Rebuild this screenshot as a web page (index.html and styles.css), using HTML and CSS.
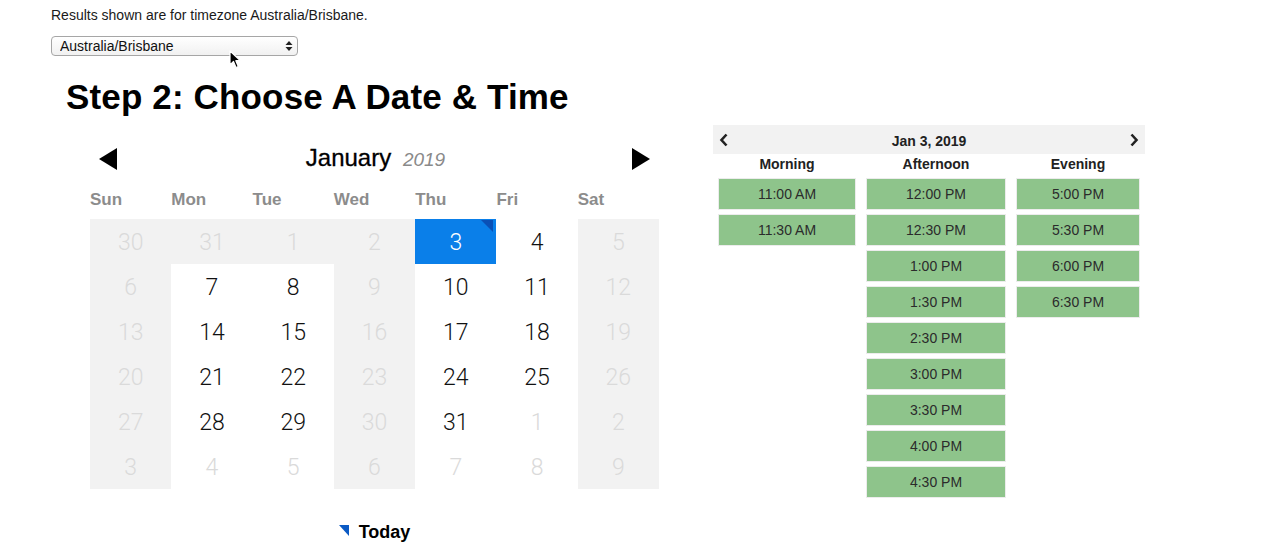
FILE: index.html
```html
<!DOCTYPE html>
<html>
<head>
<meta charset="utf-8">
<link rel="stylesheet" href="styles.css">
</head>
<body>
<div class="page">
  <p class="tz-note">Results shown are for timezone Australia/Brisbane.</p>
  <div class="select-wrap">
    <select class="tz-select"><option>Australia/Brisbane</option></select>
    <svg class="select-arrows" width="8" height="12" viewBox="0 0 8 12"><path d="M4 1 L7.5 5 H0.5 Z M4 11 L7.5 7 H0.5 Z" fill="#222"/></svg>
    <svg class="cursor" width="14" height="20" viewBox="0 0 14 20"><path d="M1 1 L1 15 L4.5 11.5 L7 17.5 L9.3 16.5 L6.8 10.7 L11.5 10.7 Z" fill="#000" stroke="#fff" stroke-width="1.2" stroke-linejoin="round"/></svg>
  </div>
  <h1 class="title">Step 2: Choose A Date &amp; Time</h1>

  <div class="booking">
    <div class="calendar">
      <div class="cal-nav">
        <svg width="18" height="22" viewBox="0 0 18 22"><path d="M18 0 V22 L0 11 Z" fill="#000"/></svg>
        <div class="cal-month">January <span class="cal-year">2019</span></div>
        <svg width="18" height="22" viewBox="0 0 18 22"><path d="M0 0 V22 L18 11 Z" fill="#000"/></svg>
      </div>
      <div class="cal-days">
        <span>Sun</span><span>Mon</span><span>Tue</span><span>Wed</span><span>Thu</span><span>Fri</span><span>Sat</span>
      </div>
      <div class="cal-grid">
        <div class="d off">30</div><div class="d off">31</div><div class="d off">1</div><div class="d off">2</div><div class="d sel">3<i class="corner"></i></div><div class="d on">4</div><div class="d off">5</div>
        <div class="d off">6</div><div class="d on">7</div><div class="d on">8</div><div class="d off">9</div><div class="d on">10</div><div class="d on">11</div><div class="d off">12</div>
        <div class="d off">13</div><div class="d on">14</div><div class="d on">15</div><div class="d off">16</div><div class="d on">17</div><div class="d on">18</div><div class="d off">19</div>
        <div class="d off">20</div><div class="d on">21</div><div class="d on">22</div><div class="d off">23</div><div class="d on">24</div><div class="d on">25</div><div class="d off">26</div>
        <div class="d off">27</div><div class="d on">28</div><div class="d on">29</div><div class="d off">30</div><div class="d on">31</div><div class="d next">1</div><div class="d off">2</div>
        <div class="d off">3</div><div class="d next">4</div><div class="d next">5</div><div class="d off">6</div><div class="d next">7</div><div class="d next">8</div><div class="d off">9</div>
      </div>
      <div class="legend"><i class="legend-mark"></i>Today</div>
    </div>

    <div class="times">
      <div class="times-head">
        <svg width="10" height="14" viewBox="0 0 10 14"><path d="M7.5 1.5 L2.5 7 L7.5 12.5" fill="none" stroke="#222" stroke-width="2.6"/></svg>
        <span>Jan 3, 2019</span>
        <svg width="10" height="14" viewBox="0 0 10 14"><path d="M2.5 1.5 L7.5 7 L2.5 12.5" fill="none" stroke="#222" stroke-width="2.6"/></svg>
      </div>
      <div class="times-cols">
        <div class="tcol c1">
          <div class="tcol-title">Morning</div>
          <div class="slot">11:00 AM</div>
          <div class="slot">11:30 AM</div>
        </div>
        <div class="tcol c2">
          <div class="tcol-title">Afternoon</div>
          <div class="slot">12:00 PM</div>
          <div class="slot">12:30 PM</div>
          <div class="slot">1:00 PM</div>
          <div class="slot">1:30 PM</div>
          <div class="slot">2:30 PM</div>
          <div class="slot">3:00 PM</div>
          <div class="slot">3:30 PM</div>
          <div class="slot">4:00 PM</div>
          <div class="slot">4:30 PM</div>
        </div>
        <div class="tcol c3">
          <div class="tcol-title">Evening</div>
          <div class="slot">5:00 PM</div>
          <div class="slot">5:30 PM</div>
          <div class="slot">6:00 PM</div>
          <div class="slot">6:30 PM</div>
        </div>
      </div>
    </div>
  </div>
</div>
</body>
</html>
```

FILE: styles.css
```css
* { box-sizing: border-box; }
html, body { margin: 0; padding: 0; background: #fff; }
body {
  font-family: "Liberation Sans", Arial, Helvetica, sans-serif;
  color: #111;
  width: 1272px;
  height: 553px;
  overflow: hidden;
}
.page { padding: 7px 0 0 51px; }

.tz-note {
  margin: 0;
  font-size: 14px;
  line-height: 17px;
  color: #1a1a1a;
}

.select-wrap {
  position: relative;
  width: 247px;
  height: 20px;
  margin-top: 12px;
}
.tz-select {
  -webkit-appearance: none;
  appearance: none;
  width: 247px;
  height: 20px;
  margin: 0;
  padding: 0 0 0 8px;
  border: 1px solid #a6a6a6;
  border-radius: 4px;
  background: linear-gradient(#ffffff, #f1f1f1);
  font-family: "Liberation Sans", Arial, sans-serif;
  font-size: 14px;
  line-height: 18px;
  color: #111;
  display: block;
}
.select-arrows { position: absolute; right: 5px; top: 4px; }
.cursor { position: absolute; left: 178px; top: 14px; }

.title {
  margin: 21px 0 0 15px;
  font-size: 35px;
  line-height: 40px;
  font-weight: bold;
  color: #000;
  letter-spacing: 0.15px;
}

.booking {
  display: flex;
  align-items: flex-start;
  margin-top: 8px;
  gap: 54px;
}

.calendar {
  width: 569px;
  margin-left: 39px;
  padding-top: 20px;
}
.cal-nav {
  display: flex;
  align-items: center;
  justify-content: space-between;
  height: 28px;
  padding: 0 9px;
}
.cal-nav svg { display: block; }
.cal-month {
  font-size: 24px;
  line-height: 28px;
  color: #000;
  margin-left: 2px;
  -webkit-text-stroke: 0.3px #000;
}
.cal-year {
  font-size: 19px;
  font-style: italic;
  color: #8a8a8a;
  margin-left: 5px;
  -webkit-text-stroke: 0;
}

.cal-days {
  display: grid;
  grid-template-columns: repeat(7, 1fr);
  height: 46px;
  align-items: center;
  padding-top: 8px;
}
.cal-days span {
  font-size: 17px;
  font-weight: bold;
  color: #8c8c8c;
  line-height: 20px;
}

.cal-grid {
  display: grid;
  grid-template-columns: repeat(7, 1fr);
  grid-auto-rows: 45px;
}
.d {
  position: relative;
  display: flex;
  align-items: center;
  justify-content: center;
  font-family: Roboto, "Liberation Sans", sans-serif;
  font-weight: 300;
  font-size: 23px;
  padding-top: 2px;
}
.d.off { background: #f2f2f2; color: #dadada; }
.d.on { background: #fff; color: #111; }
.d.next { background: #fff; color: #dadada; }
.d.sel { background: #0a7fe9; color: #fff; }
.corner {
  position: absolute;
  top: 1px;
  right: 3px;
  width: 0;
  height: 0;
  border-top: 12px solid #0a50b6;
  border-left: 12px solid transparent;
}

.legend {
  display: flex;
  align-items: center;
  justify-content: center;
  margin-top: 32px;
  font-size: 18px;
  font-weight: bold;
  color: #000;
  line-height: 22px;
}
.legend-mark {
  width: 0;
  height: 0;
  border-top: 11px solid #0b5ac4;
  border-left: 10px solid transparent;
  margin-right: 10px;
  margin-top: -4px;
}

.times { width: 432px; }
.times-head {
  display: flex;
  align-items: center;
  justify-content: space-between;
  height: 29px;
  background: #f2f2f2;
  padding: 0 6px 0 6px;
  font-size: 14px;
  font-weight: bold;
  color: #222;
}
.times-head span { padding-top: 2px; }
.times-head svg { display: block; }
.times-cols {
  display: grid;
  grid-template-columns: 148px 150px 134px;
}
.tcol { padding: 0 5px; }
.tcol-title {
  text-align: center;
  font-size: 14px;
  font-weight: bold;
  color: #222;
  line-height: 20px;
  margin-bottom: 4px;
}
.slot {
  height: 32px;
  border: 1px solid #ececec;
  background: #8ec48b;
  background-clip: padding-box;
  text-align: center;
  font-size: 14px;
  line-height: 30px;
  color: #2b2b2b;
  margin-bottom: 4px;
}
```
